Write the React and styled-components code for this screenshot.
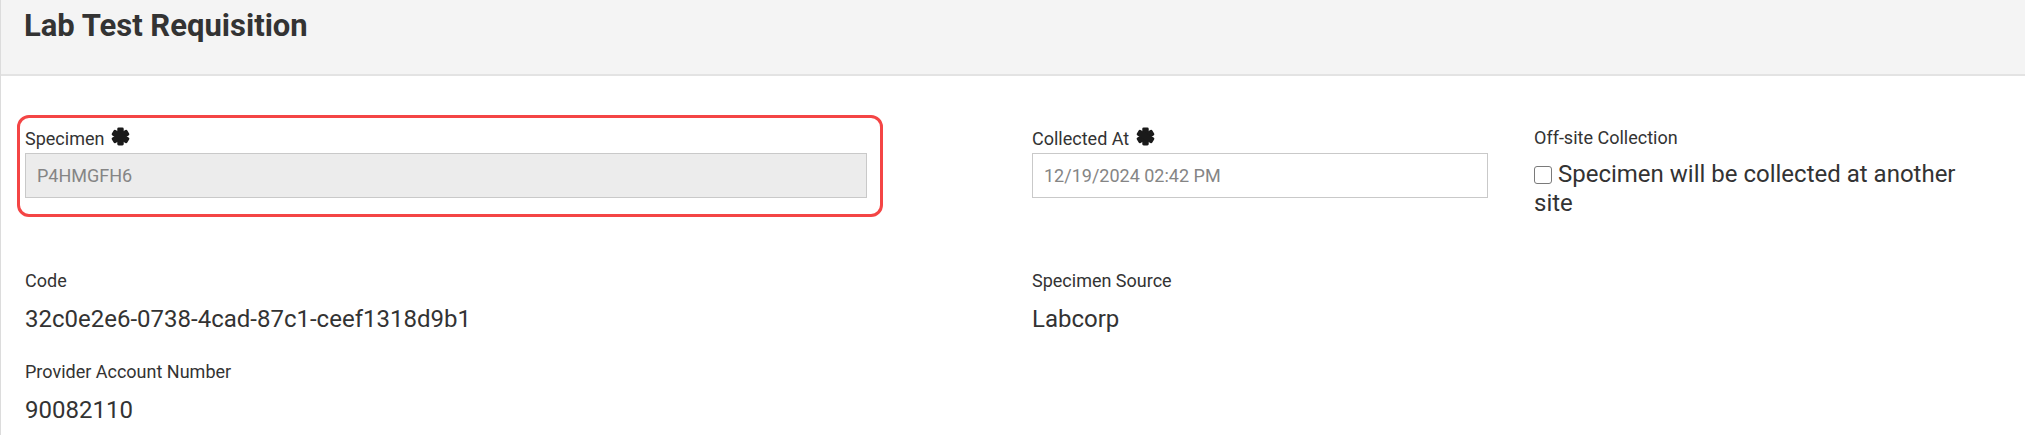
import React from "react";
import styled, { createGlobalStyle } from "styled-components";

const Global = createGlobalStyle`
  html, body { margin: 0; padding: 0; background: #fff; }
  body { font-family: Roboto, "Noto Sans", Arial, sans-serif; color: #333; }
  * { box-sizing: border-box; }
`;

const Panel = styled.section`
  border-left: 1px solid #dcdcdc;
  min-height: 435px;
`;

const Header = styled.header`
  height: 76px;
  background: #f4f4f4;
  border-bottom: 2px solid #e3e3e3;
  padding: 8px 23px 0;
`;

const Title = styled.h1`
  margin: 0;
  font-size: 31px;
  line-height: 36px;
  font-weight: 700;
  color: #333;
`;

const Body = styled.div`
  padding: 39px 24px 0;
`;

const Row = styled.div`
  display: grid;
  grid-template-columns: 1007px 502px 440px;
  align-items: start;
  margin-top: ${(p) => p.$gap || 0}px;
`;

const Highlight = styled.div`
  margin-left: -8px;
  width: 866px;
  border: 3px solid #f44545;
  border-radius: 12px;
  padding: 9px 13px 16px 5px;
`;

const Field = styled.div`
  padding-top: ${(p) => p.$offset || 0}px;
`;

const Label = styled.div`
  font-size: 18px;
  line-height: 22px;
  color: #333;
  margin-bottom: ${(p) => p.$mb || 0}px;
  white-space: nowrap;
`;

const StarSvg = styled.svg`
  width: 19px;
  height: 19px;
  margin-left: 7px;
  vertical-align: -1px;
  fill: #1a1a1a;
`;

function Required() {
  return (
    <StarSvg viewBox="0 0 20 20" aria-hidden="true">
      <rect x="6.6" y="0.6" width="6.8" height="18.8" rx="1.5" />
      <rect x="6.6" y="0.6" width="6.8" height="18.8" rx="1.5" transform="rotate(60 10 10)" />
      <rect x="6.6" y="0.6" width="6.8" height="18.8" rx="1.5" transform="rotate(120 10 10)" />
    </StarSvg>
  );
}

const TextInput = styled.input`
  display: block;
  width: ${(p) => p.$w}px;
  height: 45px;
  padding: 0 11px;
  font-family: Roboto, "Noto Sans", Arial, sans-serif;
  font-size: 18px;
  color: #858585;
  background: ${(p) => (p.$disabled ? "#ececec" : "#fff")};
  border: 1px solid #c9c9c9;
  border-radius: 0;
  outline: none;
`;

const Value = styled.div`
  font-size: 24px;
  line-height: 29px;
  color: #333;
`;

const CheckLabel = styled.label`
  display: block;
  margin-top: 11px;
  font-size: 24px;
  line-height: 29px;
  color: #333;
`;

const CheckBox = styled.input`
  appearance: none;
  -webkit-appearance: none;
  width: 18px;
  height: 18px;
  margin: 0;
  border: 1.5px solid #7a7a7a;
  border-radius: 3px;
  background: #fff;
  vertical-align: -2px;
`;

export default function App() {
  return (
    <>
      <Global />
      <Panel>
        <Header>
          <Title>Lab Test Requisition</Title>
        </Header>
        <Body>
          <Row>
            <Highlight>
              <Label $mb={3}>
                Specimen
                <Required />
              </Label>
              <TextInput $w={842} $disabled readOnly value="P4HMGFH6" />
            </Highlight>
            <Field $offset={12}>
              <Label $mb={3}>
                Collected At
                <Required />
              </Label>
              <TextInput $w={456} readOnly value="12/19/2024 02:42 PM" />
            </Field>
            <Field $offset={12}>
              <Label>Off-site Collection</Label>
              <CheckLabel>
                <CheckBox type="checkbox" /> Specimen will be collected at another site
              </CheckLabel>
            </Field>
          </Row>
          <Row $gap={52}>
            <Field>
              <Label $mb={13}>Code</Label>
              <Value>32c0e2e6-0738-4cad-87c1-ceef1318d9b1</Value>
            </Field>
            <Field>
              <Label $mb={13}>Specimen Source</Label>
              <Value>Labcorp</Value>
            </Field>
          </Row>
          <Row $gap={27}>
            <Field>
              <Label $mb={13}>Provider Account Number</Label>
              <Value>90082110</Value>
            </Field>
          </Row>
        </Body>
      </Panel>
    </>
  );
}
